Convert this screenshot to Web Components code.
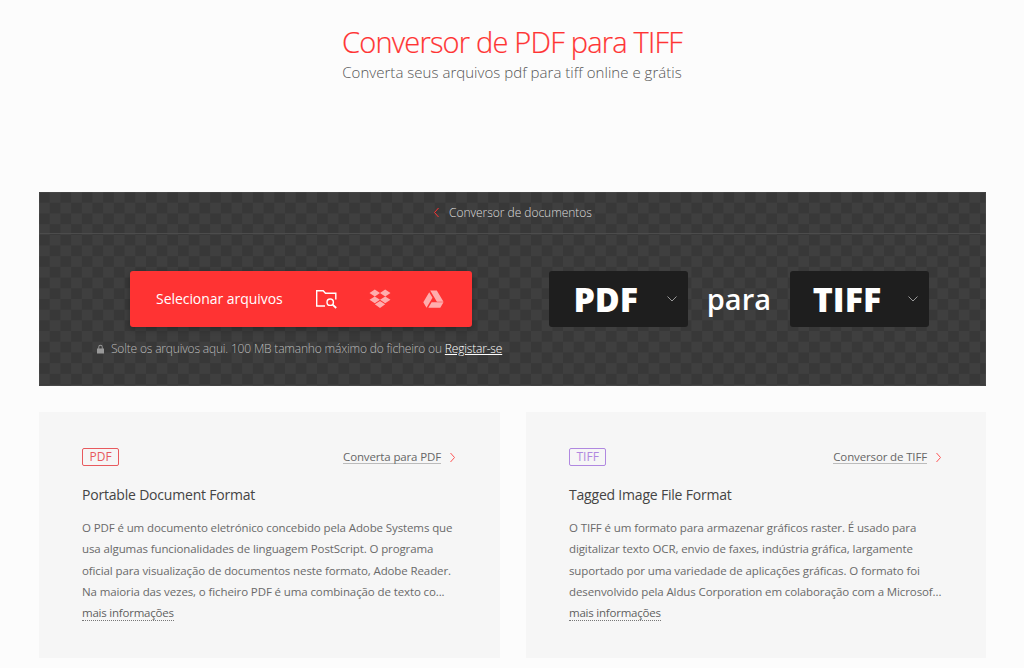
<!DOCTYPE html>
<html lang="pt"><head><meta charset="utf-8"><title>Conversor de PDF para TIFF</title>
<style>
html,body{margin:0;padding:0;height:668px;overflow:hidden}
body{background:#fcfcfc;font-family:"Open Sans",sans-serif}
</style></head><body>
<app-page></app-page>
<script>
function def(name,html,init){
  customElements.define(name,class extends HTMLElement{
    constructor(){super();const r=this.attachShadow({mode:'open'});r.innerHTML=html;}
    connectedCallback(){ if(init) init.call(this,this.shadowRoot); }
  });
}
def('page-title',`<style>
:host{display:block;text-align:center;height:192px;padding-top:23px;box-sizing:border-box}
h1{margin:0;font:300 29px/38px "Open Sans",sans-serif;color:#ff3333;letter-spacing:-.8px;-webkit-text-stroke:.2px #ff3333}
p{margin:0;font:300 15px/22px "Open Sans",sans-serif;color:#555;letter-spacing:.03px}
</style><h1><slot name="t"></slot></h1><p><slot name="s"></slot></p>`);
def('format-select',`<style>
:host{display:flex;align-items:center;justify-content:center;position:relative;width:139px;height:56px;background:#1e1e1e;border-radius:3px;box-sizing:border-box;padding-right:25px;color:#fff;font:800 34px/56px "Open Sans",sans-serif}
svg{position:absolute;right:10px;top:24px}
</style><slot></slot><svg width="12" height="8" viewBox="0 0 12 8" fill="none" stroke="#999" stroke-width="1"><path d="M1.5 1.5 6 6l4.5-4.5"/></svg>`);
def('upload-button',`<style>
:host{display:flex;align-items:center;width:342px;height:56px;background:#ff3333;border-radius:3px;box-shadow:0 2px 6px rgba(0,0,0,.3);box-sizing:border-box;padding-left:26px;color:#fff;font:400 14px/20px "Open Sans",sans-serif}
.label{width:159px;letter-spacing:-.05px}
.ic{display:flex;width:54px;justify-content:flex-start}
</style><span class="label"><slot></slot></span>
<span class="ic"><svg width="24" height="22" viewBox="0 0 24 22" fill="none" stroke="#fff" stroke-width="1.4"><path d="M10 18H1.7V2.7h6.5l2.300 2.600h10.300v6.200"/><circle cx="15.200" cy="14.200" r="3.200"/><path d="M17.600 16.600l3.600 3.400" stroke-width="1.800"/></svg></span>
<span class="ic"><svg width="22" height="20" viewBox="0 0 22 20" fill="#ffffff" fill-opacity=".6"><path d="M5.800 0.500 0.500 4l5.300 3.400L11 4zM16.200.5 11 4l5.200 3.400L21.500 4zM0.500 10.800l5.300 3.400L11 10.800 5.800 7.400zM16.200 7.400 11 10.800l5.200 3.400 5.300-3.400zM11 12l-5.200 3.300L11 19l5.200-3.700z"/></svg></span>
<span class="ic" style="width:auto"><svg width="21" height="18" viewBox="0 0 21 18" fill="#ffffff" fill-opacity=".6"><path d="M7.200.5h6.600l6.700 11.200h-6.600zM6.200 2.200l3.300 5.600-6 10L.3 12.200zM8.600 12.200h11.900L17.300 17.800H5.300z"/></svg></span>`);
def('converter-panel',`<style>
:host{display:block;margin:0 38px 0 39px;height:194px;color:#fff;background-color:#383838;
background-image:conic-gradient(#3f3f3f 25%,transparent 0 50%,#3f3f3f 0 75%,transparent 0);background-size:21.4px 21.4px;box-shadow:inset 0 0 0 1px rgba(255,255,255,.05)}
.crumb{display:flex;align-items:center;justify-content:center;gap:9px;height:41px;border-bottom:1px solid #4c4c4c;font:300 12px/39px "Open Sans",sans-serif;color:#ddd;letter-spacing:-.03px}
.crumb svg{margin-top:-1px}
.main{display:flex;padding:37px 57px 0 91px;justify-content:space-between}
.left{display:flex;flex-direction:column}
.note{display:flex;align-items:center;margin:13px 0 0 -34px;font:300 12px/18px "Open Sans",sans-serif;color:#bbb;white-space:pre;letter-spacing:-.18px}
.note svg{margin-right:6px}
.note a{color:#fff;text-decoration:underline;margin-left:3px}
.right{display:flex;align-items:center;height:56px;gap:19px}
.para{font:600 29px/56px "Open Sans",sans-serif}
</style>
<div class="crumb"><svg width="7" height="11" viewBox="0 0 7 11" fill="none" stroke="#ff3333"><path d="M5.500 1 1.500 5.500l4 4.500"/></svg><span>Conversor de documentos</span></div>
<div class="main"><div class="left"><upload-button>Selecionar arquivos</upload-button>
<div class="note"><svg width="9" height="10" viewBox="0 0 9 10" fill="#999"><path d="M1 4.500h7v5H1zM2.300 4.500V3a2.200 2.200 0 0 1 4.400 0v1.500H5.800V3a1.300 1.300 0 0 0-2.600 0v1.500z"/></svg>Solte os arquivos aqui. 100 MB tamanho máximo do ficheiro ou<a>Registar-se</a></div></div>
<div class="right"><format-select>PDF</format-select><span class="para">para</span><format-select>TIFF</format-select></div></div>`);
def('info-card',`<style>
:host{display:block;background:#f6f6f6;height:246px;box-sizing:border-box;padding:36px 44px 0 43px;color:#555}
.top{display:flex;justify-content:space-between;align-items:center;height:18px}
.tag{box-sizing:border-box;height:18px;border:1px solid var(--c);border-radius:2px;color:var(--c);font:400 12px/16px "Open Sans",sans-serif;padding:0 6.5px}
.lnk{display:flex;align-items:center;gap:8px;font:400 11.500px/16px "Open Sans",sans-serif;color:#666;letter-spacing:-.14px}
.lnk span{border-bottom:1px solid #bbb;line-height:13px}
h2{margin:18.500px 0 0;font:400 14px/20px "Open Sans",sans-serif;color:#444;letter-spacing:-.2px}
p{margin:12.500px 0 0;font:400 11.500px/21.250px "Open Sans",sans-serif;color:#6a6a6a;white-space:nowrap;letter-spacing:-.11px}
.more{display:inline-block;font:400 11.500px/14px "Open Sans",sans-serif;color:#5f5f5f;border-bottom:1px dotted #777;letter-spacing:-.22px}
</style><div class="top"><span class="tag"><slot name="tag"></slot></span><span class="lnk"><span><slot name="link"></slot></span><svg width="7" height="11" viewBox="0 0 7 11" fill="none" stroke="#ff5555"><path d="M1.500 1l4 4.500-4 4.500"/></svg></span></div>
<h2><slot name="title"></slot></h2><p><slot></slot><br><span class="more">mais informações</span></p>`);
def('app-page',`<style>
:host{display:block}
.cards{display:grid;grid-template-columns:461px 460px;gap:26px;margin:26px 0 0 39px}
.tiff{--c:#b088e0}.pdf{--c:#e85a5e}
</style>
<page-title><span slot="t">Conversor de PDF para TIFF</span><span slot="s">Converta seus arquivos pdf para tiff online e grátis</span></page-title>
<converter-panel></converter-panel>
<div class="cards">
<info-card class="pdf"><span slot="tag">PDF</span><span slot="link">Converta para PDF</span><span slot="title">Portable Document Format</span>O PDF é um documento eletrónico concebido pela Adobe Systems que<br>usa algumas funcionalidades de linguagem PostScript. O programa<br>oficial para visualização de documentos neste formato, Adobe Reader.<br>Na maioria das vezes, o ficheiro PDF é uma combinação de texto co...</info-card>
<info-card class="tiff"><span slot="tag">TIFF</span><span slot="link">Conversor de TIFF</span><span slot="title">Tagged Image File Format</span>O TIFF é um formato para armazenar gráficos raster. É usado para<br>digitalizar texto OCR, envio de faxes, indústria gráfica, largamente<br>suportado por uma variedade de aplicações gráficas. O formato foi<br>desenvolvido pela Aldus Corporation em colaboração com a Microsof...</info-card>
</div>`);
</script></body></html>
